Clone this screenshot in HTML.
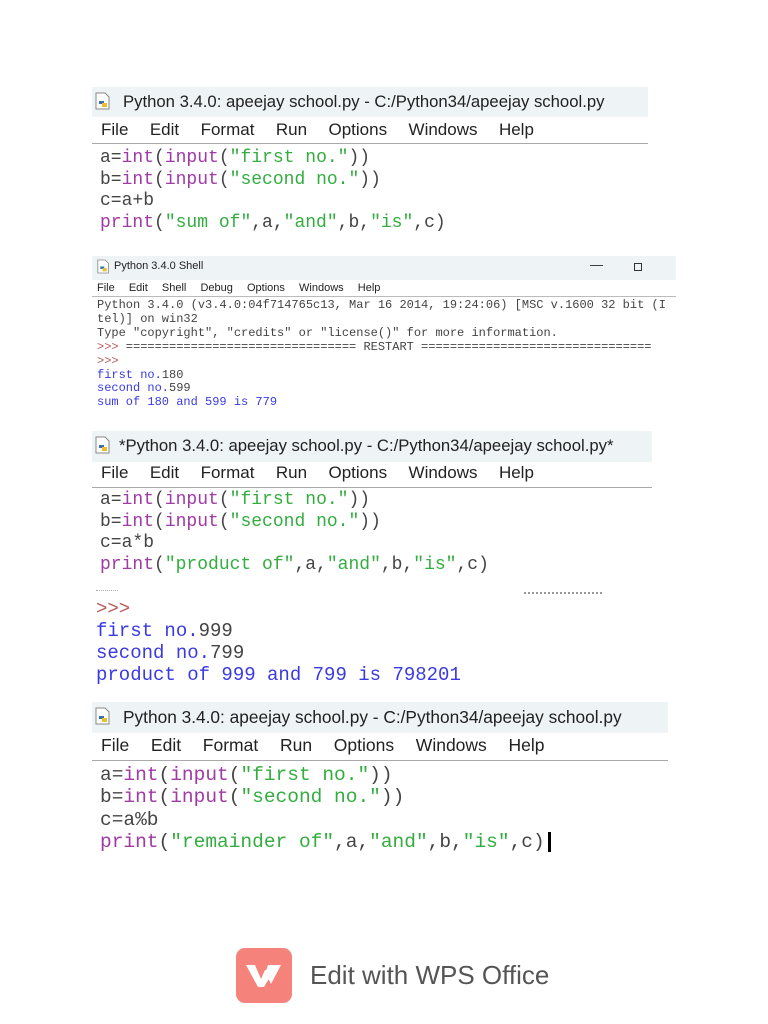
<!DOCTYPE html>
<html><head><meta charset="utf-8"><style>
*{margin:0;padding:0;box-sizing:border-box}
body{width:768px;height:1024px;background:#fff;position:relative;overflow:hidden;font-family:"Liberation Sans",sans-serif}
.abs{position:absolute;white-space:pre}
.tb{position:absolute;background:#eef3f6}
.t{color:#222}
.m{font-family:"Liberation Mono",monospace;color:#444}
.k{color:#a03aa5}.s{color:#34ad40}.o{color:#3a3ae2}.p{color:#b85a5a}
.ico{position:absolute;width:16px;height:18px}
.line{position:absolute;height:1px;background:#aaa}
</style></head><body>

<!-- Editor 1 -->
<div class="tb" style="left:92px;top:87px;width:556px;height:30px"></div>
<svg class="ico" style="left:95px;top:92px" viewBox="0 0 16 18"><path d="M1 1h9l4 4v12H1z" fill="#fff" stroke="#888"/><path d="M4 9h5v3H4z" fill="#3a6fb0"/><path d="M7 11h5v4H7z" fill="#e8c030"/></svg>
<div class="abs t" style="left:123px;top:92px;font-size:16.7px">Python 3.4.0: apeejay school.py - C:/Python34/apeejay school.py</div>
<div class="abs t" style="left:101px;top:120px;font-size:17px;word-spacing:6px">File  Edit  Format  Run  Options  Windows  Help</div>
<div class="line" style="left:92px;top:143px;width:556px"></div>
<div class="abs m" style="left:100px;top:148px;font-size:18px;line-height:21.7px">a=<span class="k">int</span>(<span class="k">input</span>(<span class="s">"first no."</span>))
b=<span class="k">int</span>(<span class="k">input</span>(<span class="s">"second no."</span>))
c=a+b
<span class="k">print</span>(<span class="s">"sum of"</span>,a,<span class="s">"and"</span>,b,<span class="s">"is"</span>,c)</div>

<!-- Shell -->
<div class="tb" style="left:92px;top:256px;width:584px;height:24px"></div>
<svg class="ico" style="left:97px;top:259px;width:13px;height:15px" viewBox="0 0 16 18"><path d="M1 1h9l4 4v12H1z" fill="#fff" stroke="#888"/><path d="M4 9h5v3H4z" fill="#3a6fb0"/><path d="M7 11h5v4H7z" fill="#e8c030"/></svg>
<div class="abs t" style="left:114px;top:260px;font-size:11px">Python 3.4.0 Shell</div>
<div class="abs t" style="left:590px;top:257px;font-size:13px">—</div>
<div style="position:absolute;left:634px;top:263px;width:8px;height:8px;border:1px solid #333"></div>
<div class="abs t" style="left:97px;top:282px;font-size:11px;word-spacing:4px">File  Edit  Shell  Debug  Options  Windows  Help</div>
<div class="line" style="left:92px;top:296px;width:584px;background:#bbb"></div>
<div class="abs m" style="left:97px;top:299px;font-size:12px;line-height:13.9px">Python 3.4.0 (v3.4.0:04f714765c13, Mar 16 2014, 19:24:06) [MSC v.1600 32 bit (I
tel)] on win32
Type "copyright", "credits" or "license()" for more information.
<span class="p">&gt;&gt;&gt;</span> ================================ RESTART ================================
<span class="p">&gt;&gt;&gt;</span>
<span class="o">first no.</span>180
<span class="o">second no.</span>599
<span class="o">sum of 180 and 599 is 779</span></div>

<!-- Editor 2 -->
<div class="tb" style="left:92px;top:431px;width:560px;height:31px"></div>
<svg class="ico" style="left:95px;top:436px" viewBox="0 0 16 18"><path d="M1 1h9l4 4v12H1z" fill="#fff" stroke="#888"/><path d="M4 9h5v3H4z" fill="#3a6fb0"/><path d="M7 11h5v4H7z" fill="#e8c030"/></svg>
<div class="abs t" style="left:119px;top:436px;font-size:16.7px">*Python 3.4.0: apeejay school.py - C:/Python34/apeejay school.py*</div>
<div class="abs t" style="left:101px;top:463px;font-size:17px;word-spacing:6px">File  Edit  Format  Run  Options  Windows  Help</div>
<div class="line" style="left:92px;top:487px;width:560px"></div>
<div class="abs m" style="left:100px;top:490px;font-size:18px;line-height:21.7px">a=<span class="k">int</span>(<span class="k">input</span>(<span class="s">"first no."</span>))
b=<span class="k">int</span>(<span class="k">input</span>(<span class="s">"second no."</span>))
c=a*b
<span class="k">print</span>(<span class="s">"product of"</span>,a,<span class="s">"and"</span>,b,<span class="s">"is"</span>,c)</div>

<!-- Output 2 -->
<div class="abs" style="left:96px;top:590px;width:22px;border-top:1px dotted #aaa"></div>
<div class="abs" style="left:524px;top:592px;width:78px;border-top:2px dotted #999"></div>
<div class="abs m" style="left:96px;top:598px;font-size:19px;line-height:22px"><span class="p">&gt;&gt;&gt;</span>
<span class="o">first no.</span>999
<span class="o">second no.</span>799
<span class="o">product of 999 and 799 is 798201</span></div>

<!-- Editor 3 -->
<div class="tb" style="left:92px;top:702px;width:576px;height:31px"></div>
<svg class="ico" style="left:95px;top:707px" viewBox="0 0 16 18"><path d="M1 1h9l4 4v12H1z" fill="#fff" stroke="#888"/><path d="M4 9h5v3H4z" fill="#3a6fb0"/><path d="M7 11h5v4H7z" fill="#e8c030"/></svg>
<div class="abs t" style="left:123px;top:707px;font-size:17.3px">Python 3.4.0: apeejay school.py - C:/Python34/apeejay school.py</div>
<div class="abs t" style="left:101px;top:735px;font-size:17.5px;word-spacing:6px">File  Edit  Format  Run  Options  Windows  Help</div>
<div class="line" style="left:92px;top:760px;width:576px"></div>
<div class="abs m" style="left:100px;top:764px;font-size:19.5px;line-height:22.3px">a=<span class="k">int</span>(<span class="k">input</span>(<span class="s">"first no."</span>))
b=<span class="k">int</span>(<span class="k">input</span>(<span class="s">"second no."</span>))
c=a%b
<span class="k">print</span>(<span class="s">"remainder of"</span>,a,<span class="s">"and"</span>,b,<span class="s">"is"</span>,c)</div>
<div style="position:absolute;left:548px;top:832px;width:3px;height:20px;background:#000"></div>

<!-- WPS -->
<div style="position:absolute;left:236px;top:948px;width:56px;height:55px;border-radius:9px;background:#f5837c"></div>
<svg style="position:absolute;left:244px;top:962px" width="40" height="28" viewBox="0 0 40 28"><path d="M2 3h9l6 14 4-9h9l-10 17h-6z" fill="#fff"/><path d="M24 3h13l-10 19-3-6 4-7h-6z" fill="#fff"/></svg>
<div class="abs" style="left:310px;top:960px;font-size:26px;color:#555">Edit with WPS Office</div>
</body></html>
